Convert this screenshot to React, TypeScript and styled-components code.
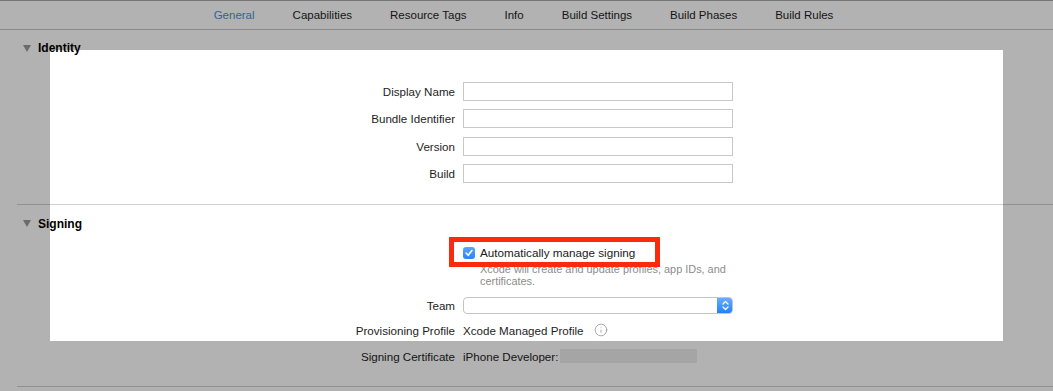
import React from "react";
import styled, { createGlobalStyle } from "styled-components";
import { Info } from "lucide-react";

const GlobalStyle = createGlobalStyle`
  html, body { margin: 0; padding: 0; background: #ffffff; }
  * { box-sizing: border-box; }
`;

const Window = styled.div`
  position: relative;
  width: 1053px;
  height: 391px;
  overflow: hidden;
  background: #ffffff;
  font-family: "Liberation Sans", Arial, sans-serif;
  color: #1d1d1d;
`;

const TabBar = styled.nav`
  height: 30px;
  display: flex;
  align-items: center;
  justify-content: center;
  gap: 38px;
  border-top: 1px solid #a8a8a8;
  border-bottom: 1px solid #c8c8c8;
  padding-right: 6px;
  padding-bottom: 1px;
`;

const Tab = styled.span<{ $active?: boolean }>`
  font-size: 11.5px;
  line-height: 14px;
  color: ${(p) => (p.$active ? "#4a90d9" : "#1e1e1e")};
`;

const Section = styled.section<{ $top: number; $bottom: number }>`
  margin-left: 17px;
  padding-top: ${(p) => p.$top}px;
  padding-bottom: ${(p) => p.$bottom}px;
  border-bottom: 1px solid #d0d0d0;
`;

const SectionHeader = styled.h2`
  margin: 0;
  height: 14px;
  display: flex;
  align-items: center;
  gap: 7px;
  padding-left: 6px;
  font-size: 12px;
  font-weight: 700;
  color: #000000;
  line-height: 14px;
`;

const Disclosure = () => (
  <svg width="8" height="7" viewBox="0 0 8 7">
    <polygon points="0,0 8,0 4,7" fill="#9a9a9a" />
  </svg>
);

const Form = styled.div<{ $top: number }>`
  margin-top: ${(p) => p.$top}px;
  display: grid;
  grid-template-columns: 438px 270px;
  column-gap: 8px;
  row-gap: 8.3px;
  align-items: center;
`;

const FieldRow = styled.div`
  display: contents;
`;

const Label = styled.label`
  font-size: 11.6px;
  line-height: 17px;
  text-align: right;
  color: #1d1d1d;
`;

const TextField = styled.div`
  height: 19px;
  border: 1px solid #c9c9c9;
  background: #ffffff;
`;

const Grid = styled.div<{ $top: number; $h: number }>`
  margin-top: ${(p) => p.$top}px;
  height: ${(p) => p.$h}px;
  display: grid;
  grid-template-columns: 438px 270px;
  column-gap: 8px;
  align-items: center;
`;

const Value = styled.div`
  display: flex;
  align-items: center;
  gap: 10px;
  font-size: 11.6px;
  line-height: 17px;
  color: #1d1d1d;
  white-space: nowrap;
`;

const CheckRow = styled.div`
  position: relative;
  display: flex;
  align-items: center;
  gap: 5px;
  font-size: 11.7px;
  line-height: 16px;
  color: #1a1a1a;
  white-space: nowrap;
`;

const Highlight = styled.div`
  position: absolute;
  left: -14px;
  top: -8px;
  width: 211px;
  height: 30px;
  border: 5px solid #fb2a0c;
  pointer-events: none;
`;

const CheckBox = () => (
  <svg width="12" height="12" viewBox="0 0 12 12">
    <defs>
      <linearGradient id="cbg" x1="0" y1="0" x2="0" y2="1">
        <stop offset="0" stopColor="#5aa5fb" />
        <stop offset="1" stopColor="#2a84f6" />
      </linearGradient>
    </defs>
    <rect x="0" y="0" width="12" height="12" rx="3" fill="url(#cbg)" />
    <path d="M3.2 6.2 L5.2 8.3 L8.9 3.6" stroke="#ffffff" strokeWidth="1.6" fill="none" strokeLinecap="round" strokeLinejoin="round" />
  </svg>
);

const Description = styled.p`
  grid-column: 2;
  margin: 2px 0 0 17px;
  font-size: 10.9px;
  line-height: 12px;
  color: #8c8c8c;
  max-width: 253px;
`;

const Popup = styled.div`
  height: 17px;
  display: flex;
  justify-content: flex-end;
  border: 1px solid #c4c4c4;
  border-radius: 4px;
  background: #ffffff;
  overflow: hidden;
`;

const Stepper = styled.div`
  width: 16px;
  margin: -1px -1px -1px 0;
  display: flex;
  align-items: center;
  justify-content: center;
  background: linear-gradient(#69b0fb, #1f7ff5);
  border-radius: 0 4px 4px 0;
`;

const Chevrons = () => (
  <svg width="7" height="11" viewBox="0 0 7 11">
    <path d="M1 4 L3.5 1.5 L6 4 M1 7 L3.5 9.5 L6 7" stroke="#ffffff" strokeWidth="1.3" fill="none" strokeLinecap="round" strokeLinejoin="round" />
  </svg>
);

const Redacted = styled.span`
  display: inline-block;
  width: 137px;
  height: 14px;
  margin-left: -8px;
  background: #ededed;
`;

const Spotlight = styled.div`
  position: absolute;
  left: 50px;
  top: 50px;
  width: 953px;
  height: 291px;
  box-shadow: 0 0 0 3000px rgba(0, 0, 0, 0.3);
  pointer-events: none;
`;

const tabs = ["General", "Capabilities", "Resource Tags", "Info", "Build Settings", "Build Phases", "Build Rules"];
const identityFields = ["Display Name", "Bundle Identifier", "Version", "Build"];

export default function App() {
  return (
    <>
      <GlobalStyle />
      <Window>
        <TabBar>
          {tabs.map((t) => (
            <Tab key={t} $active={t === "General"}>
              {t}
            </Tab>
          ))}
        </TabBar>

        <Section $top={11} $bottom={21}>
          <SectionHeader>
            <Disclosure />
            Identity
          </SectionHeader>
          <Form $top={27}>
            {identityFields.map((f) => (
              <FieldRow key={f}>
                <Label>{f}</Label>
                <TextField />
              </FieldRow>
            ))}
          </Form>
        </Section>

        <Section $top={12} $bottom={21}>
          <SectionHeader>
            <Disclosure />
            Signing
          </SectionHeader>
          <Grid $top={14} $h={16}>
            <span />
            <CheckRow>
              <Highlight />
              <CheckBox />
              Automatically manage signing
            </CheckRow>
          </Grid>
          <Grid $top={0} $h={26}>
            <span />
            <Description>
              Xcode will create and update profiles, app IDs, and certificates.
            </Description>
          </Grid>
          <Grid $top={10} $h={17}>
            <Label>Team</Label>
            <Popup>
              <Stepper>
                <Chevrons />
              </Stepper>
            </Popup>
          </Grid>
          <Grid $top={8} $h={17}>
            <Label>Provisioning Profile</Label>
            <Value>
              Xcode Managed Profile
              <Info size={14} color="#9a9a9a" strokeWidth={1.4} />
            </Value>
          </Grid>
          <Grid $top={9} $h={17}>
            <Label>Signing Certificate</Label>
            <Value>
              iPhone Developer:
              <Redacted />
            </Value>
          </Grid>
        </Section>

        <Spotlight />
      </Window>
    </>
  );
}
